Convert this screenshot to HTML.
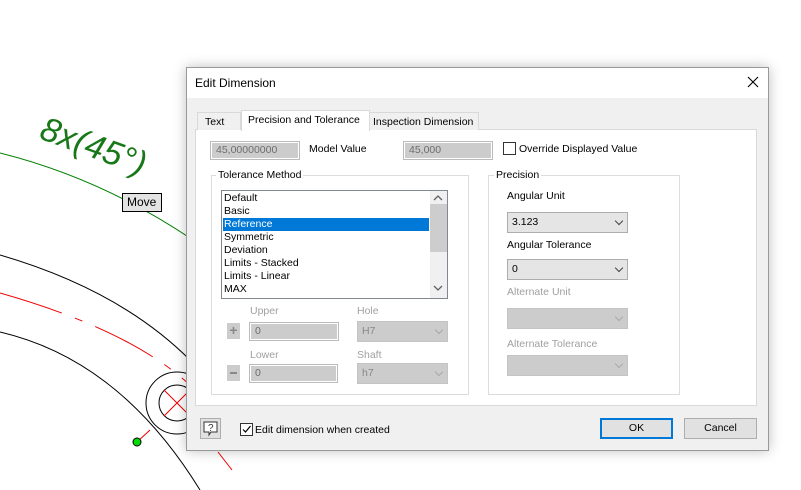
<!DOCTYPE html>
<html><head><meta charset="utf-8"><style>
*{box-sizing:border-box;margin:0;padding:0}
body{width:801px;height:490px;background:#fff;position:relative;overflow:hidden;font-family:"Liberation Sans",sans-serif;font-size:10.5px;color:#000}
.a{position:absolute}
.t{position:absolute;white-space:nowrap;font-size:10.5px;line-height:13px}
.dis{color:#a0a0a0}
.inp{position:absolute;background:#ccc;border:1px solid #bbb;box-shadow:inset 0 0 0 1px #fff;color:#6d6d6d;padding:2px 5px;line-height:13px}
.sel{position:absolute;background:#e5e5e5;border:1px solid #adadad;padding:3px 4px;line-height:13px}
.sel.d{background:#ccc;border-color:#c4c4c4;color:#888}
.chev{position:absolute;right:5px;top:5px;width:6px;height:6px;border-right:1px solid #444;border-bottom:1px solid #444;transform:rotate(45deg)}
.d .chev{border-color:#aaa}
.grp{position:absolute;border:1px solid #dcdcdc}
.btn{position:absolute;background:#e1e1e1;border:1px solid #adadad;text-align:center;line-height:18px}
</style></head><body>
<svg class="a" style="left:0;top:0" width="801" height="490">
<path d="M0,153 Q100,178 190,238" stroke="#008000" fill="none"/>
<path d="M0,255 Q120,290 190,360" stroke="#000" fill="none"/>
<path d="M0,332 Q120,360 200,490" stroke="#000" fill="none"/>
<path d="M0,293 Q130,330 190,385" stroke="#e00" fill="none" stroke-dasharray="65,14,8,14"/>
<path d="M218,452 L232,470" stroke="#e00" fill="none"/>
<circle cx="177" cy="403" r="31" stroke="#000" fill="none"/>
<circle cx="177" cy="403" r="18" stroke="#000" fill="none"/>
<path d="M164,390 L190,416 M164,416 L190,390 M150,430 L137,442" stroke="#e00"/>
<circle cx="137" cy="442" r="4" fill="#0d0" stroke="#000"/>
<text x="38" y="138" transform="rotate(20 38 138)" fill="#187818" font-family="Liberation Sans, sans-serif" font-size="34" font-style="italic">8x(45°)</text>
</svg>
<div class="a" style="left:122px;top:193px;width:40px;height:19px;background:#e3e3e3;border:1px solid #000;font-size:12px;line-height:17px;padding-left:4px">Move</div>

<div class="a" style="left:186px;top:67px;width:583px;height:384px;background:#f0f0f0;border:1px solid #999;box-shadow:0 0 12px rgba(0,0,0,.25)">
 <div class="a" style="left:0;top:0;width:581px;height:30px;background:#fff"></div>
 <div class="t" style="left:8px;top:9px;font-size:12px">Edit Dimension</div>
 <svg class="a" style="left:560px;top:8px" width="12" height="12"><path d="M1,1L11,11M11,1L1,11" stroke="#000" stroke-width="1.1"/></svg>
 <div class="a" style="left:8px;top:61px;width:562px;height:277px;background:#fff;border:1px solid #d9d9d9"></div>
 <div class="a" style="left:10px;top:44px;width:44px;height:18px;background:#f0f0f0;border:1px solid #d9d9d9;border-bottom:none"></div>
 <div class="t" style="left:18px;top:48px">Text</div>
 <div class="a" style="left:182px;top:44px;width:110px;height:18px;background:#f0f0f0;border:1px solid #d9d9d9;border-bottom:none"></div>
 <div class="t" style="left:186px;top:48px">Inspection Dimension</div>
 <div class="a" style="left:54px;top:42px;width:129px;height:21px;background:#fff;border:1px solid #d9d9d9;border-bottom:none"></div>
 <div class="t" style="left:61px;top:46px">Precision and Tolerance</div>

 <div class="inp" style="left:23px;top:73px;width:90px;height:19px">45,00000000</div>
 <div class="t" style="left:122px;top:75px">Model Value</div>
 <div class="inp" style="left:216px;top:73px;width:90px;height:19px">45,000</div>
 <div class="a" style="left:316px;top:74px;width:13px;height:13px;border:1px solid #333;background:#fff"></div>
 <div class="t" style="left:332px;top:75px">Override Displayed Value</div>

 <div class="grp" style="left:24px;top:107px;width:258px;height:220px"></div>
 <div class="t" style="left:29px;top:101px;background:#fff;padding:0 2px">Tolerance Method</div>
 <div class="a" style="left:34px;top:122px;width:227px;height:109px;border:1px solid #828790;background:#fff"></div>
 <div class="a" style="left:36px;top:150px;width:206px;height:13px;background:#0078d7"></div>
 <div class="a" style="left:243px;top:123px;width:17px;height:107px;background:#f0f0f0"></div>
 <div class="a" style="left:243px;top:136px;width:17px;height:48px;background:#cdcdcd"></div>
 <svg class="a" style="left:246px;top:126px" width="10" height="8"><path d="M1,6L5,2L9,6" stroke="#606060" fill="none" stroke-width="1.3"/></svg>
 <svg class="a" style="left:246px;top:216px" width="10" height="8"><path d="M1,2L5,6L9,2" stroke="#606060" fill="none" stroke-width="1.3"/></svg>
 <div class="t" style="left:37px;top:124px;line-height:13px">Default<br>Basic<br><span style="color:#fff">Reference</span><br>Symmetric<br>Deviation<br>Limits - Stacked<br>Limits - Linear<br>MAX</div>

 <div class="t dis" style="left:63px;top:237px">Upper</div>
 <div class="t dis" style="left:170px;top:237px">Hole</div>
 <div class="a" style="left:40px;top:255px;width:13px;height:16px;background:#ccc;color:#888;text-align:center;font-size:14px;line-height:15px;font-weight:bold">+</div>
 <div class="inp" style="left:62px;top:254px;width:90px;height:19px">0</div>
 <div class="sel d" style="left:170px;top:253px;width:91px;height:21px">H7<div class="chev"></div></div>
 <div class="t dis" style="left:63px;top:281px">Lower</div>
 <div class="t dis" style="left:170px;top:281px">Shaft</div>
 <div class="a" style="left:40px;top:297px;width:13px;height:16px;background:#ccc"><div class="a" style="left:3px;top:7px;width:7px;height:2px;background:#888"></div></div>
 <div class="inp" style="left:62px;top:296px;width:89px;height:19px">0</div>
 <div class="sel d" style="left:170px;top:295px;width:91px;height:21px">h7<div class="chev"></div></div>

 <div class="grp" style="left:301px;top:107px;width:192px;height:220px"></div>
 <div class="t" style="left:307px;top:101px;background:#fff;padding:0 2px">Precision</div>
 <div class="t" style="left:320px;top:122px">Angular Unit</div>
 <div class="sel" style="left:320px;top:144px;width:121px;height:21px">3.123<div class="chev"></div></div>
 <div class="t" style="left:320px;top:171px">Angular Tolerance</div>
 <div class="sel" style="left:320px;top:191px;width:121px;height:21px">0<div class="chev"></div></div>
 <div class="t dis" style="left:320px;top:218px">Alternate Unit</div>
 <div class="sel d" style="left:320px;top:240px;width:121px;height:21px"><div class="chev"></div></div>
 <div class="t dis" style="left:320px;top:270px">Alternate Tolerance</div>
 <div class="sel d" style="left:320px;top:287px;width:121px;height:21px"><div class="chev"></div></div>

 <div class="a" style="left:13px;top:350px;width:21px;height:21px;background:#e1e1e1;border:1px solid #adadad"></div>
 <svg class="a" style="left:15px;top:352px" width="18" height="18"><path d="M2,2H15V12H9L7,15V12H2Z" fill="#fff" stroke="#333"/><text x="6" y="11" font-size="10" font-family="Liberation Sans" fill="#333">?</text></svg>
 <div class="a" style="left:53px;top:355px;width:13px;height:13px;border:1px solid #333;background:#fff"></div>
 <svg class="a" style="left:54px;top:356px" width="11" height="11"><path d="M2,5.5L4.5,8L9.5,2" stroke="#000" fill="none" stroke-width="1.2"/></svg>
 <div class="t" style="left:68px;top:356px">Edit dimension when created</div>
 <div class="btn" style="left:413px;top:350px;width:73px;height:21px;border:2px solid #0078d7;line-height:17px">OK</div>
 <div class="btn" style="left:497px;top:350px;width:73px;height:21px">Cancel</div>
</div>
</body></html>
